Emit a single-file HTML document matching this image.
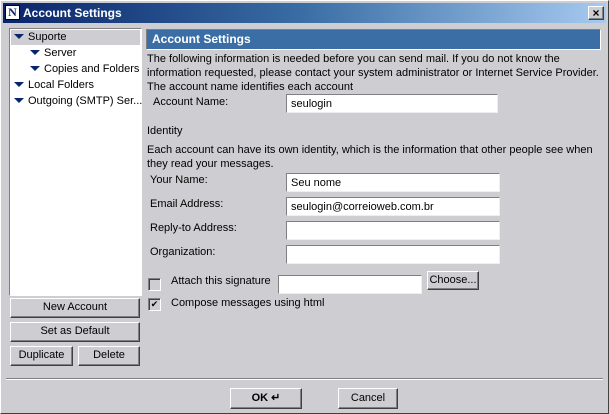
<!DOCTYPE html>
<html><head><style>
*{box-sizing:border-box;margin:0;padding:0}
body{width:609px;height:414px;background:#cecdd2;font-family:"Liberation Sans",sans-serif;font-size:11px;color:#000;position:relative;overflow:hidden}
.win{position:absolute;left:0;top:0;width:609px;height:414px;border:1px solid #fff;border-right-color:#404040;border-bottom-color:#404040;outline:1px solid #888}
.a{position:absolute;white-space:nowrap}
.title{position:absolute;left:3px;top:3px;width:603px;height:20px;background:linear-gradient(90deg,#0a246a,#3a6ea5 50%,#a6caf0)}
.inp{position:absolute;background:#fff;border-top:1px solid #808080;border-left:1px solid #808080;border-bottom:1px solid #eee;border-right:1px solid #eee;padding:3px 4px;font-size:11px}
.btn{position:absolute;background:#cecdd2;border:1px solid #fff;border-right-color:#404040;border-bottom-color:#404040;box-shadow:inset -1px -1px #808080;text-align:center;font-size:11px;line-height:17px}
.cb{position:absolute;width:13px;height:13px;border:1px solid #808080;border-right-color:#fff;border-bottom-color:#fff;background:#cecdd2;box-shadow:inset 1px 1px #404040}
.tri{display:inline-block;width:0;height:0;border-left:5px solid transparent;border-right:5px solid transparent;border-top:5px solid #0a246a;margin-right:4px;vertical-align:1px}
</style></head><body>
<div class="win"></div>
<div class="title"></div>
<div class="a" style="left:5px;top:5px;width:15px;height:15px;background:#fff;border:1px solid #000"><div style="font:bold 12px 'Liberation Serif',serif;color:#0a246a;text-align:center;line-height:13px">N</div></div>
<div class="a" style="left:23px;top:6px;color:#fff;font-weight:bold;font-size:12px">Account Settings</div>
<div class="btn" style="left:588px;top:6px;width:16px;height:14px;line-height:12px;font-weight:bold;font-size:12px">×</div>

<div class="a" style="left:9px;top:28px;width:133px;height:268px;background:#fff;border:1px solid #808080;border-right-color:#fff;border-bottom-color:#fff"></div>
<div class="a" style="left:11px;top:30px;width:129px;height:15px;background:#cecdd2"></div>
<div class="a" style="left:14px;top:31px"><span class="tri"></span>Suporte</div>
<div class="a" style="left:30px;top:47px"><span class="tri"></span>Server</div>
<div class="a" style="left:30px;top:63px"><span class="tri"></span>Copies and Folders</div>
<div class="a" style="left:14px;top:79px"><span class="tri"></span>Local Folders</div>
<div class="a" style="left:14px;top:95px"><span class="tri"></span>Outgoing (SMTP) Ser...</div>

<div class="btn" style="left:10px;top:298px;width:130px;height:20px">New Account</div>
<div class="btn" style="left:10px;top:322px;width:130px;height:20px">Set as Default</div>
<div class="btn" style="left:10px;top:346px;width:63px;height:20px">Duplicate</div>
<div class="btn" style="left:78px;top:346px;width:62px;height:20px">Delete</div>

<div class="a" style="left:146px;top:29px;width:455px;height:21px;background:#3a6ea5;border:1px solid #808080;border-right-color:#fff;border-bottom-color:#fff"></div>
<div class="a" style="left:152px;top:32px;color:#fff;font-weight:bold;font-size:12px">Account Settings</div>
<div class="a" style="left:147px;top:52px;line-height:14px">The following information is needed before you can send mail. If you do not know the<br>information requested, please contact your system administrator or Internet Service Provider.<br>The account name identifies each account</div>
<div class="a" style="left:153px;top:96px">Account Name:</div>
<div class="inp" style="left:286px;top:94px;width:212px;height:19px">seulogin</div>
<div class="a" style="left:147px;top:125px">Identity</div>
<div class="a" style="left:147px;top:143px;line-height:14px">Each account can have its own identity, which is the information that other people see when<br>they read your messages.</div>
<div class="a" style="left:150px;top:174px">Your Name:</div>
<div class="inp" style="left:286px;top:173px;width:214px;height:19px">Seu nome</div>
<div class="a" style="left:150px;top:198px">Email Address:</div>
<div class="inp" style="left:286px;top:197px;width:214px;height:19px">seulogin@correioweb.com.br</div>
<div class="a" style="left:150px;top:222px">Reply-to Address:</div>
<div class="inp" style="left:286px;top:221px;width:214px;height:19px"></div>
<div class="a" style="left:150px;top:246px">Organization:</div>
<div class="inp" style="left:286px;top:245px;width:214px;height:19px"></div>

<div class="cb" style="left:148px;top:278px"></div>
<div class="a" style="left:171px;top:275px">Attach this signature</div>
<div class="inp" style="left:278px;top:275px;width:144px;height:19px"></div>
<div class="btn" style="left:427px;top:271px;width:52px;height:19px">Choose...</div>
<div class="cb" style="left:148px;top:298px;font-size:9px;line-height:10px;text-align:center">✔</div>
<div class="a" style="left:171px;top:297px">Compose messages using html</div>

<div class="a" style="left:6px;top:378px;width:597px;height:2px;border-top:1px solid #808080;border-bottom:1px solid #fff"></div>
<div class="btn" style="left:230px;top:388px;width:72px;height:21px;font-weight:bold;line-height:19px">OK ↵</div>
<div class="btn" style="left:338px;top:388px;width:60px;height:21px;line-height:19px">Cancel</div>
</body></html>
